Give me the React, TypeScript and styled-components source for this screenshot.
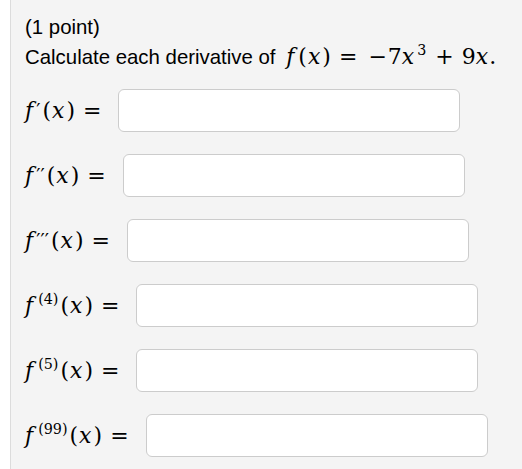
import React from "react";
import styled, { createGlobalStyle } from "styled-components";

const GlobalStyle = createGlobalStyle`
  html, body {
    margin: 0;
    padding: 0;
    background: #ffffff;
  }
`;

const Panel = styled.div`
  margin-left: 10px;
  min-height: 469px;
  box-sizing: border-box;
  border-left: 1px solid #dcdcdc;
  background: #f4f4f4;
  padding: 13px 14px 0 14px;
  font-family: "Liberation Sans", Arial, sans-serif;
  font-size: 20.4px;
  color: #000;
`;

const Line = styled.div`
  line-height: 29px;
  white-space: nowrap;
`;

// TeX-like math run
const MathRun = styled.span<{ $lead?: number }>`
  font-family: "DejaVu Serif", "Liberation Serif", serif;
  font-size: 22px;
  white-space: nowrap;
  margin-left: ${(p) => p.$lead ?? 0}px;
`;

const Mi = styled.i<{ $pad?: number }>`
  font-style: italic;
  padding-right: ${(p) => p.$pad ?? 1}px;
`;

const Paren = styled.span`
  padding: 0 1px;
`;

const Op = styled.span<{ $space?: number }>`
  padding: 0 ${(p) => p.$space ?? 7}px;
`;

const Minus = styled.span`
  padding: 0 1px 0 4px;
`;

const Prime = styled.span`
  font-size: 0.85em;
  position: relative;
  top: -0.05em;
  padding-right: 1px;
`;

const Sup = styled.sup`
  font-size: 0.65em;
  vertical-align: 0;
  position: relative;
  top: -0.6em;
  padding-left: 2px;
  padding-right: 1px;
`;

const Questions = styled.div`
  display: flex;
  flex-direction: column;
  gap: 22px;
  margin-top: 15px;
`;

const Row = styled.div`
  display: flex;
  align-items: center;
  height: 43px;
`;

const Label = styled.label`
  display: inline-flex;
  align-items: baseline;
  margin-right: 10px;
`;

const AnswerInput = styled.input`
  width: 342px;
  height: 43px;
  box-sizing: border-box;
  border: 1px solid #cccccc;
  border-radius: 6px;
  background: #ffffff;
  padding: 4px 8px;
  font-size: 16px;
  outline: none;
`;

const orders: React.ReactNode[] = [
  <Prime key="1">{"\u2032"}</Prime>,
  <Prime key="2">{"\u2032\u2032"}</Prime>,
  <Prime key="3">{"\u2032\u2032\u2032"}</Prime>,
  <Sup key="4">(4)</Sup>,
  <Sup key="5">(5)</Sup>,
  <Sup key="99">(99)</Sup>,
];

const FofX = ({ mark }: { mark?: React.ReactNode }) => (
  <>
    <Mi $pad={3}>f</Mi>
    {mark}
    <Paren>(</Paren>
    <Mi>x</Mi>
    <Paren>)</Paren>
  </>
);

export default function App() {
  return (
    <>
      <GlobalStyle />
      <Panel>
        <Line>(1 point)</Line>
        <Line>
          Calculate each derivative of{" "}
          <MathRun $lead={5}>
            <FofX />
            <Op>=</Op>
            <Minus>−</Minus>7<Mi>x</Mi>
            <Sup>3</Sup>
            <Op $space={8}>+</Op>9<Mi>x</Mi>.
          </MathRun>
        </Line>
        <Questions>
          {orders.map((mark, i) => (
            <Row key={i}>
              <Label>
                <MathRun>
                  <FofX mark={mark} />
                  <Op>=</Op>
                </MathRun>
              </Label>
              <AnswerInput type="text" />
            </Row>
          ))}
        </Questions>
      </Panel>
    </>
  );
}
